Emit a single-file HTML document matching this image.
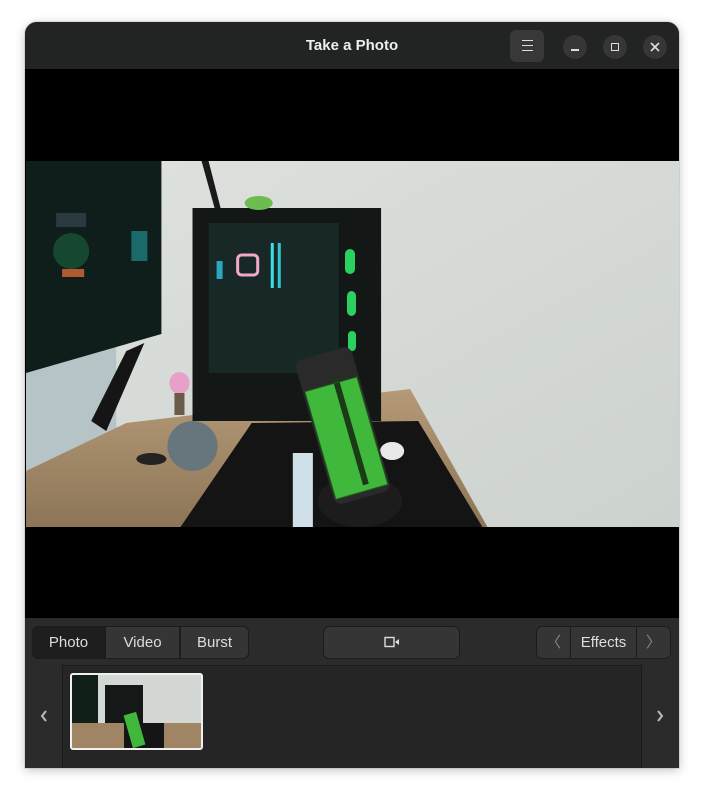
<!DOCTYPE html>
<html><head><style>
*{margin:0;padding:0;box-sizing:border-box}
body{width:704px;height:796px;background:#fff;font-family:"Liberation Sans","DejaVu Sans",sans-serif;position:relative;overflow:hidden}
.win{position:absolute;left:25px;top:22px;width:654px;height:746px;background:#2b2b2b;border-radius:12px 12px 0 0;overflow:hidden;box-shadow:0 2px 10px rgba(0,0,0,.25),0 0 0 1px rgba(0,0,0,.08)}
.tb{position:absolute;left:0;top:0;width:654px;height:47px;background:#222323}
.title{position:absolute;left:0;width:100%;top:15px;text-align:center;color:#eee;font-weight:bold;font-size:15px}
.menu{position:absolute;left:485px;top:8px;width:34px;height:32px;background:#383838;border-radius:6px}
.menu i{position:absolute;left:12px;width:11px;height:1px;background:#ddd}
.cb{position:absolute;top:13px;width:24px;height:24px;border-radius:50%;background:#363636}
.vid{position:absolute;left:0;top:47px;width:654px;height:549px;background:#000}
.bar{position:absolute;left:0;top:596px;width:654px;height:150px;background:#2b2b2b}
.btn{position:absolute;height:33px;border:1px solid #1c1c1c;background:#353535;color:#ddd;font-size:15px;text-align:center;line-height:31px}
.strip{position:absolute;left:37px;top:47px;width:580px;height:104px;background:#252525;border:1px solid #1b1b1b}
</style></head><body>
<div class="win">
 <div class="tb">
  <div class="title">Take a Photo</div>
  <div class="menu"><i style="top:10px"></i><i style="top:15px"></i><i style="top:20px"></i></div>
  <div class="cb" style="left:538px"><div style="position:absolute;left:8px;top:14px;width:8px;height:1.5px;background:#ddd"></div></div>
  <div class="cb" style="left:578px"><div style="position:absolute;left:8px;top:8px;width:8px;height:8px;border:1.5px solid #ddd"></div></div>
  <div class="cb" style="left:618px"><svg width="24" height="24" style="position:absolute;left:0;top:0"><path d="M8 8L16 16M16 8L8 16" stroke="#ddd" stroke-width="1.6"/></svg></div>
 </div>
 <div class="vid">
  <svg width="654" height="366" viewBox="0 0 652 366" style="position:absolute;left:1px;top:92px" preserveAspectRatio="none">
   <defs><linearGradient id="w" x1="0" y1="0" x2="1" y2="1"><stop offset="0" stop-color="#dfe2de"/><stop offset="1" stop-color="#ccd2ce"/></linearGradient>
   <linearGradient id="d" x1="0" y1="0" x2="0" y2="1"><stop offset="0" stop-color="#b59a76"/><stop offset="1" stop-color="#8c7558"/></linearGradient></defs>
   <rect width="652" height="366" fill="url(#w)"/>
   <rect x="0" y="180" width="90" height="140" fill="#b6c4c8"/>
   <polygon points="0,0 135,0 135,173 0,212" fill="#0f1d1b"/>
   <circle cx="45" cy="90" r="18" fill="#1a5a3a" opacity=".7"/>
   <rect x="30" y="52" width="30" height="14" fill="#2a3a40"/>
   <rect x="36" y="108" width="22" height="8" fill="#b05a30"/>
   <rect x="105" y="70" width="16" height="30" fill="#1b6a6a"/>
   <polygon points="65,260 100,190 118,182 80,270" fill="#151515"/>
   <polygon points="0,310 100,262 383,228 460,366 0,366" fill="url(#d)"/>
   <polygon points="175,0 182,0 194,47 188,47" fill="#1a1a1a"/>
   <rect x="166" y="47" width="188" height="213" fill="#131816"/>
   <rect x="182" y="62" width="130" height="150" fill="#172826"/>
   <rect x="211" y="94" width="20" height="20" rx="4" fill="none" stroke="#f2a8c8" stroke-width="3"/>
   <rect x="244" y="82" width="3" height="45" fill="#3ee0e8"/><rect x="251" y="82" width="3" height="45" fill="#2fc8d0"/>
   <rect x="190" y="100" width="6" height="18" fill="#2aa8c0"/>
   <rect x="318" y="88" width="10" height="25" rx="5" fill="#2ad060"/><rect x="320" y="130" width="9" height="25" rx="5" fill="#2ad060"/><rect x="321" y="170" width="8" height="20" rx="4" fill="#2ad060"/>
   <ellipse cx="232" cy="42" rx="14" ry="7" fill="#6cbc50"/>
   <ellipse cx="153" cy="222" rx="10" ry="11" fill="#e8a0c8"/><rect x="148" y="232" width="10" height="22" fill="#6a5a4a"/>
   <polygon points="225,262 391,260 455,366 154,366" fill="#141414"/>
   <rect x="266" y="292" width="20" height="74" fill="#cfe0e8"/>
   <circle cx="166" cy="285" r="25" fill="#66767c"/>
   <ellipse cx="125" cy="298" rx="15" ry="6" fill="#222"/>
   <ellipse cx="365" cy="290" rx="12" ry="9" fill="#e8e8e8"/>
   <ellipse cx="333" cy="340" rx="42" ry="26" fill="#1c1c1c"/>
   <g transform="rotate(-16 314 262)">
    <rect x="286" y="190" width="58" height="150" rx="8" fill="#2a2a2a"/>
    <rect x="288" y="222" width="54" height="112" fill="#3fb83c"/>
    <rect x="318" y="218" width="6" height="110" fill="#1b3a18"/>
    <rect x="288" y="222" width="54" height="112" fill="none" stroke="#1f5a1c" stroke-width="1"/>
   </g>
  </svg>
 </div>
 <div class="bar">
  <div class="btn" style="left:7px;top:8px;width:73px;background:#1e1e1e;border-radius:6px 0 0 6px">Photo</div>
  <div class="btn" style="left:80px;top:8px;width:75px">Video</div>
  <div class="btn" style="left:155px;top:8px;width:69px;border-radius:0 6px 6px 0">Burst</div>
  <div class="btn" style="left:298px;top:8px;width:137px;border-radius:6px"><svg width="16" height="12" style="vertical-align:-1px"><rect x="1" y="1.5" width="9" height="9" fill="none" stroke="#ddd" stroke-width="1.4"/><path d="M11 6L15 3V9Z" fill="#ddd"/></svg></div>
  <div class="btn" style="left:511px;top:8px;width:35px;border-radius:6px 0 0 6px;color:#888">〈</div>
  <div class="btn" style="left:545px;top:8px;width:67px">Effects</div>
  <div class="btn" style="left:611px;top:8px;width:35px;border-radius:0 6px 6px 0;color:#888">〉</div>
  <svg width="10" height="14" style="position:absolute;left:14px;top:91px"><path d="M7 2L3 7L7 12" stroke="#bbb" stroke-width="2" fill="none"/></svg>
  <svg width="10" height="14" style="position:absolute;left:630px;top:91px"><path d="M3 2L7 7L3 12" stroke="#bbb" stroke-width="2" fill="none"/></svg>
  <div class="strip">
   <div style="position:absolute;left:7px;top:7px;width:133px;height:77px;border:2px solid #f0f0f0;border-radius:3px;overflow:hidden;background:#d4d8d4">
    <div style="position:absolute;left:0;top:0;width:26px;height:50px;background:#102018"></div>
    <div style="position:absolute;left:33px;top:10px;width:38px;height:43px;background:#141816"></div>
    <div style="position:absolute;left:0;top:48px;width:133px;height:30px;background:#a08565"></div>
    <div style="position:absolute;left:52px;top:48px;width:40px;height:30px;background:#151515"></div>
    <div style="position:absolute;left:56px;top:38px;width:13px;height:34px;background:#3fb83c;transform:rotate(-16deg)"></div>
   </div>
  </div>
 </div>
</div>
</body></html>
